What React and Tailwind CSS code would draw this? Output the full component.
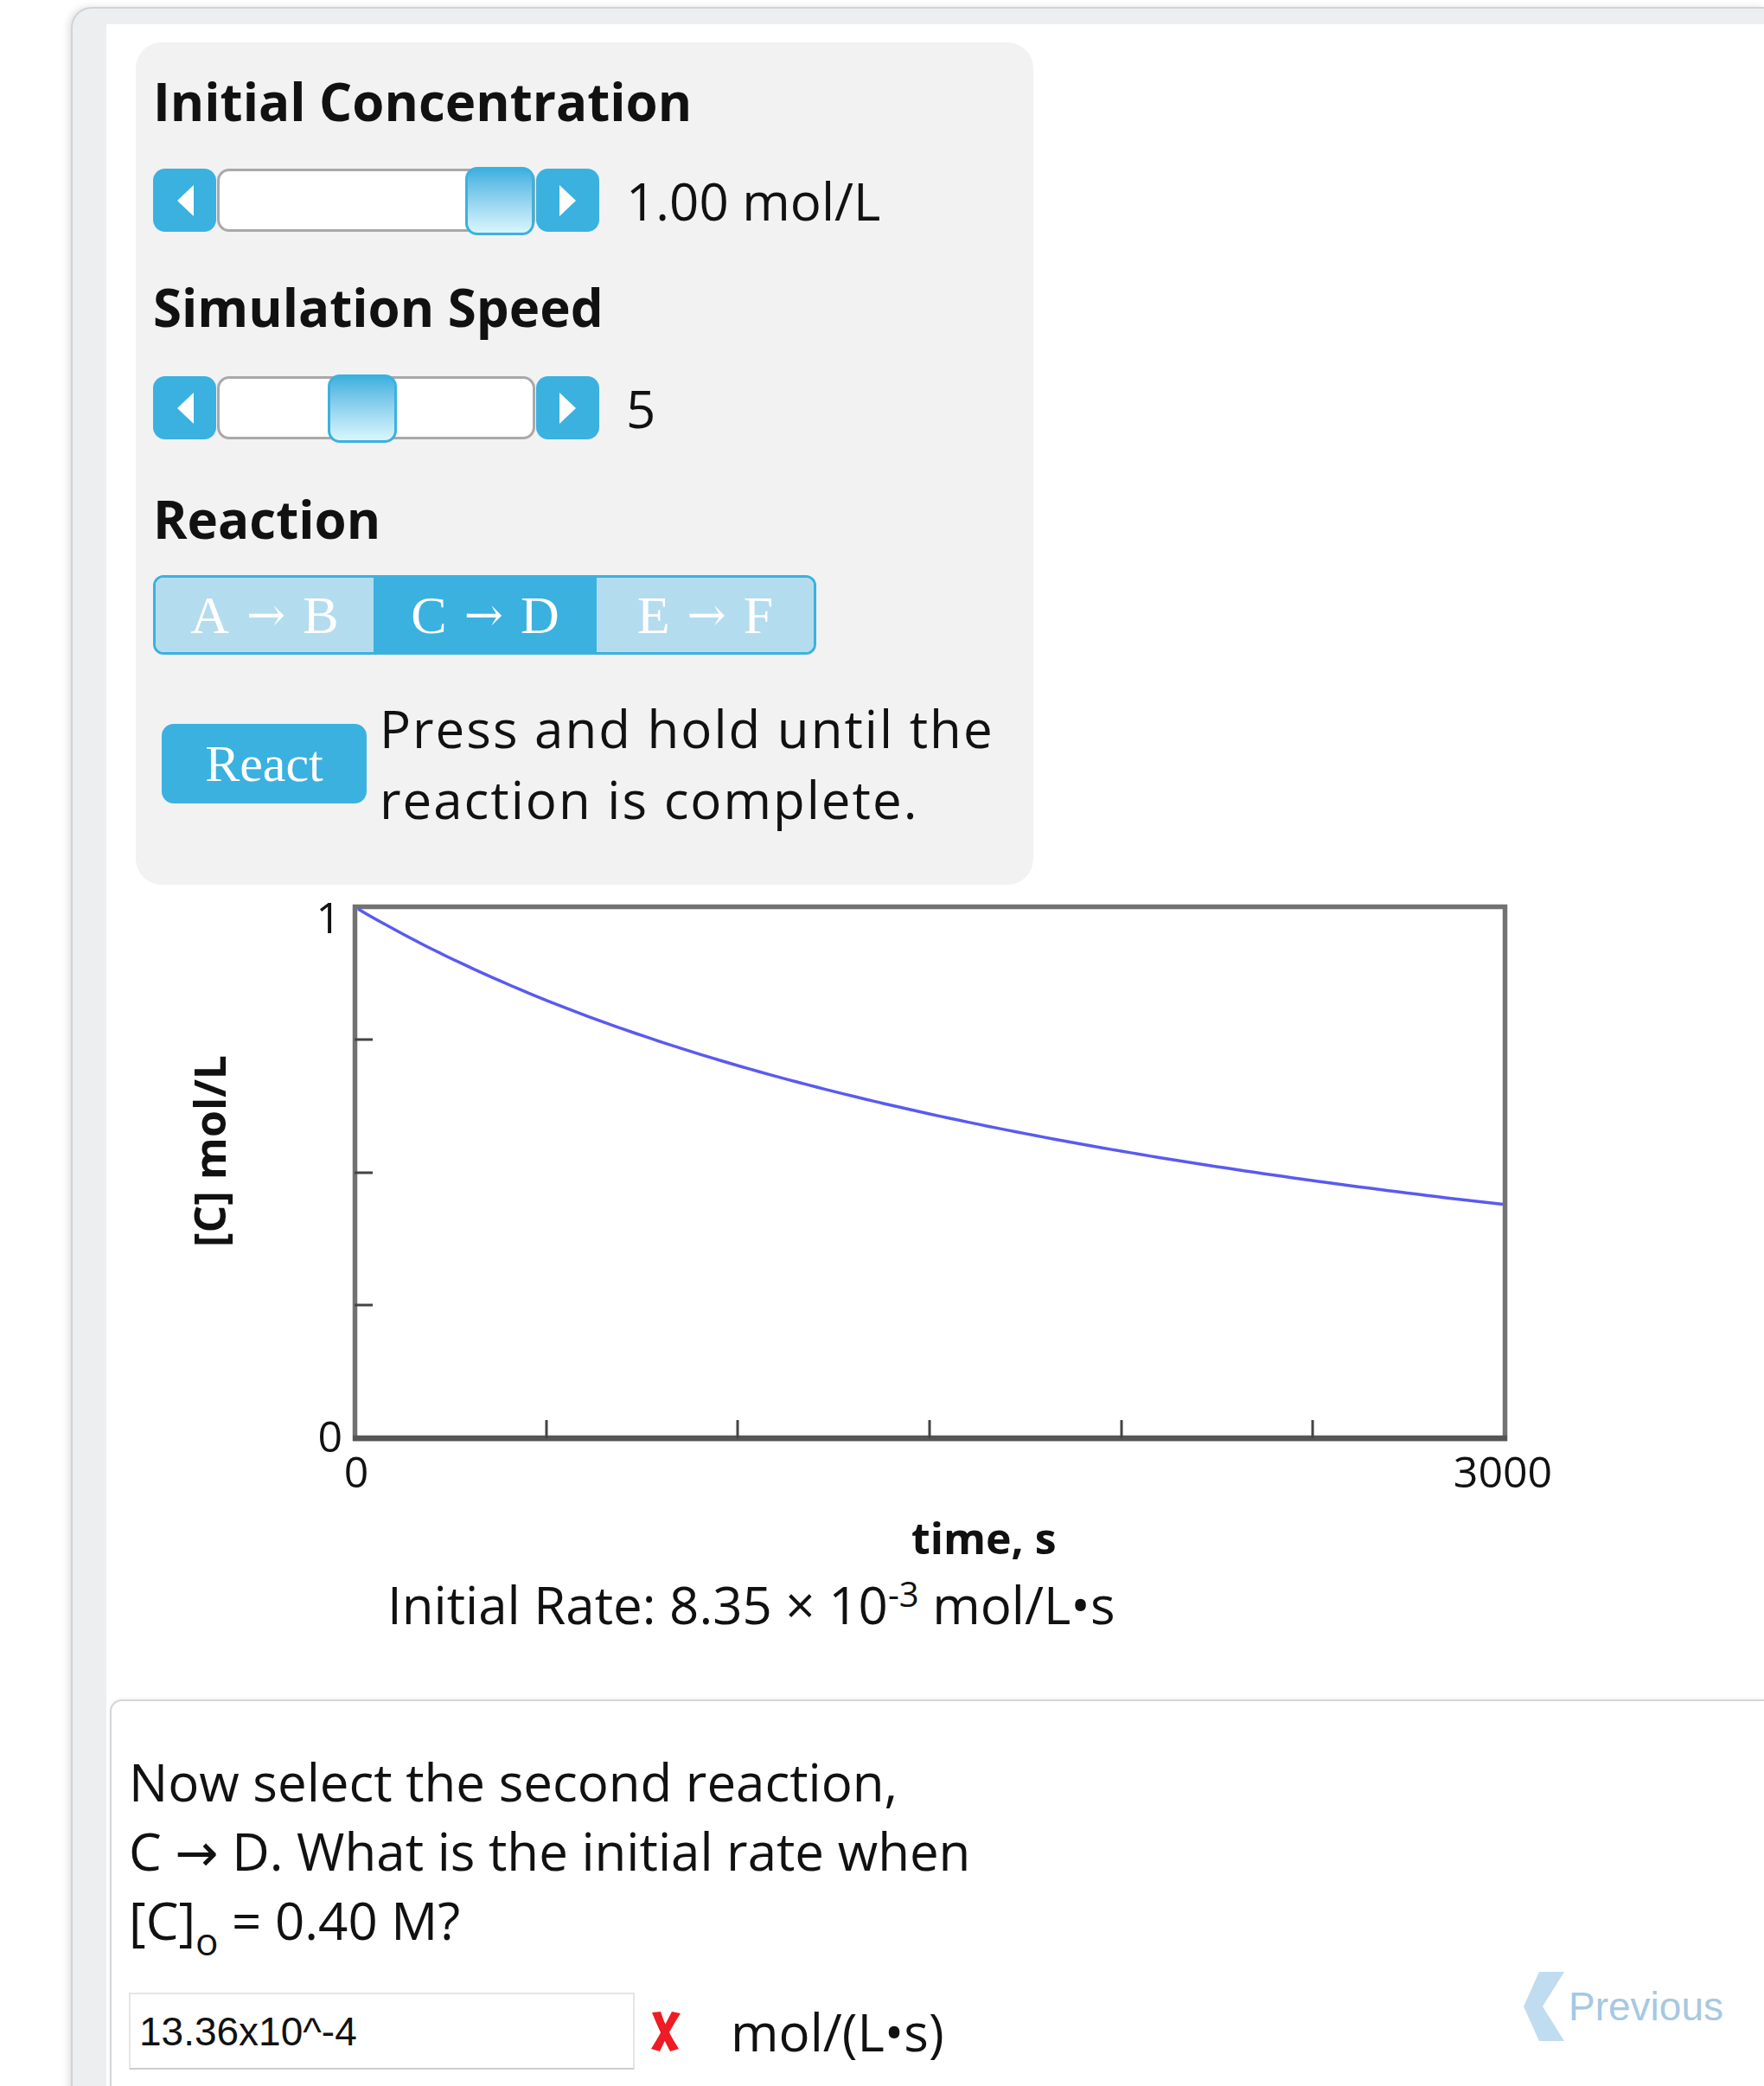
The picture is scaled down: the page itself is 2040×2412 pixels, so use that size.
import React from 'react';

const K = (1 / 0.44 - 1) / 3000;

function curvePoints() {
  // box in svg coords: x 287..1617, y 25..640
  const pts = [];
  for (let i = 0; i <= 120; i++) {
    const t = (i / 120) * 3000;
    const c = 1 / (1 + K * t);
    const x = 291 + (t / 3000) * (1615 - 291);
    const y = 638 - c * (638 - 28);
    pts.push(`${x.toFixed(1)},${y.toFixed(1)}`);
  }
  return pts.join(' ');
}

function Slider({ thumb, value }) {
  return (
    <div className="flex items-center">
      <button className="flex h-[73px] w-[73px] items-center justify-center rounded-[14px] bg-[#3bb1e0]">
        <svg width="22" height="38" viewBox="0 0 22 38">
          <path d="M21 1 L2 19 L21 37 Z" fill="white" />
        </svg>
      </button>
      <div className="relative ml-[1px] h-[73px] w-[368px] rounded-[14px] border-[3px] border-[#a9a9a9] bg-white">
        <div
          className="absolute top-[-5px] h-[79px] w-[80px] rounded-[14px] border-[3px] border-[#3bb1e0] bg-linear-to-b from-[#3cb1e0] to-[#d9f6fd]"
          style={{ left: thumb }}
        />
      </div>
      <button className="ml-[1px] flex h-[73px] w-[73px] items-center justify-center rounded-[14px] bg-[#3bb1e0]">
        <svg width="22" height="38" viewBox="0 0 22 38">
          <path d="M1 1 L20 19 L1 37 Z" fill="white" />
        </svg>
      </button>
      <span className="ml-[31px] text-[60px] leading-none text-[#111]">{value}</span>
    </div>
  );
}

function Chart() {
  const font = "'Open Sans', 'DejaVu Sans', sans-serif";
  return (
    <svg width="1700" height="717" viewBox="0 0 1700 717" className="block">
      <rect x="287.5" y="25.5" width="1330" height="615" fill="white" stroke="#727272" strokeWidth="5.5" />
      <line x1="285" y1="640" x2="1620" y2="640" stroke="#555" strokeWidth="6.5" />
      {[179, 333, 486].map((y) => (
        <line key={y} x1="287" y1={y} x2="308" y2={y} stroke="#444" strokeWidth="3" />
      ))}
      {[509, 730, 952, 1174, 1395].map((x) => (
        <line key={x} x1={x} y1="640" x2={x} y2="619" stroke="#444" strokeWidth="3" />
      ))}
      <polyline points={curvePoints()} fill="none" stroke="#5a5af0" strokeWidth="3.5" />
      <text x="271" y="56" textAnchor="end" fontFamily={font} fontSize="50" fill="#111">1</text>
      <text x="273" y="656" textAnchor="end" fontFamily={font} fontSize="50" fill="#111">0</text>
      <text x="289" y="697" textAnchor="middle" fontFamily={font} fontSize="50" fill="#111">0</text>
      <text x="1615" y="697" textAnchor="middle" fontFamily={font} fontSize="50" fill="#111">3000</text>
      <text
        x="138"
        y="308"
        textAnchor="middle"
        transform="rotate(-90 138 308)"
        fontFamily={font}
        fontSize="50"
        fontWeight="700"
        fill="#111"
      >
        [C] mol/L
      </text>
    </svg>
  );
}

function Arrow() {
  return <span className="mx-[20px] font-['DejaVu_Serif',serif] text-[54px]">→</span>;
}

export default function App() {
  return (
    <div className="h-[2412px] w-[2040px] overflow-hidden bg-white font-['Open_Sans','DejaVu_Sans',sans-serif] text-[#111]">
      <div className="ml-[82px] mt-[8px] min-h-[2404px] rounded-tl-[24px] border-l-2 border-t-2 border-[#d2d3d5] bg-[#eceef0] pl-[39px] pt-[18px] shadow-[-3px_0_8px_rgba(0,0,0,0.12)]">
        <div className="min-h-[2384px] bg-white pt-[21px]">
          {/* Controls */}
          <div className="ml-[34px] w-[1038px] rounded-[30px] bg-[#f2f2f2] pb-[58px] pl-[20px] pt-[38px]">
            <h2 className="text-[60px] font-bold leading-[60px]">Initial Concentration</h2>
            <div className="mt-[48px]">
              <Slider thumb={284} value="1.00 mol/L" />
            </div>
            <h2 className="mt-[57px] text-[60px] font-bold leading-[60px]">Simulation Speed</h2>
            <div className="mt-[50px]">
              <Slider thumb={125} value="5" />
            </div>
            <h2 className="mt-[62px] text-[60px] font-bold leading-[60px]">Reaction</h2>
            <div className="mt-[35px] flex h-[92px] w-[767px] overflow-hidden rounded-[12px] border-[3px] border-[#3bb1e0] font-['Liberation_Serif',serif] text-[62px] leading-none text-white">
              <div className="flex w-[252px] items-center justify-center bg-[#b4dcef]">
                A<Arrow />B
              </div>
              <div className="flex w-[258px] items-center justify-center bg-[#3bb1e0]">
                C<Arrow />D
              </div>
              <div className="flex flex-1 items-center justify-center bg-[#b4dcef]">
                E<Arrow />F
              </div>
            </div>
            <div className="mt-[44px] flex items-center">
              <button className="ml-[10px] flex h-[92px] w-[237px] items-center justify-center rounded-[14px] bg-[#3bb1e0] font-['Liberation_Serif',serif] text-[60px] leading-none text-white">
                React
              </button>
              <p className="ml-[15px] text-[60px] leading-[82px] tracking-[2px]">
                Press and hold until the
                <br />
                reaction is complete.
              </p>
            </div>
          </div>

          {/* Graph */}
          <Chart />
          <div className="mt-[13px] pl-[931px] text-[50px] font-bold leading-[50px]">time, s</div>
          <div className="mt-[22px] pl-[325px] text-[60px] leading-[60px]">
            Initial Rate: 8.35 × 10<sup className="text-[40px]">-3</sup> mol/L•s
          </div>

          {/* Question card */}
          <div className="ml-[4px] mt-[80px] min-h-[500px] rounded-tl-[14px] border-l-2 border-t-2 border-[#d6d6d6] pl-[20px] pt-[53px] shadow-[0_-1px_4px_rgba(0,0,0,0.06)]">
            <p className="whitespace-nowrap text-[60px] leading-[80px]">
              Now select the second reaction,
              <br />
              C → D. What is the initial rate when
              <br />
              [C]<sub className="-bottom-[18px] text-[44px]">o</sub> = 0.40 M?
            </p>
            <div className="mt-[44px] flex items-center">
              <div className="flex h-[89px] w-[585px] items-center border-2 border-[#e6e6e6] border-b-[#cdcdcd] pl-[10px] font-['Liberation_Sans',Arial,sans-serif] text-[46px] leading-none">
                13.36x10^-4
              </div>
              <svg className="ml-[14px]" width="44" height="50" viewBox="0 0 44 50">
                <path d="M6 3 L16 2 Q22 22 37 45 L27 48 Q16 28 6 3 Z" fill="#ee1c24" />
                <path d="M29 2 L39 4 Q26 24 15 48 L5 45 Q18 24 29 2 Z" fill="#ee1c24" />
              </svg>
              <span className="ml-[53px] text-[60px] leading-none">mol/(L•s)</span>
              <a className="-mt-[24px] ml-auto mr-[47px] flex items-center gap-[5px] self-start font-['Liberation_Sans',Arial,sans-serif] text-[46px] leading-none text-[#a6c8e3]">
                <svg width="47" height="80" viewBox="0 0 47 80">
                  <polygon points="18,0 47,0 22,40 47,80 18,80 0,40" fill="#c0dcf0" />
                </svg>
                Previous
              </a>
            </div>
          </div>
        </div>
      </div>
    </div>
  );
}
